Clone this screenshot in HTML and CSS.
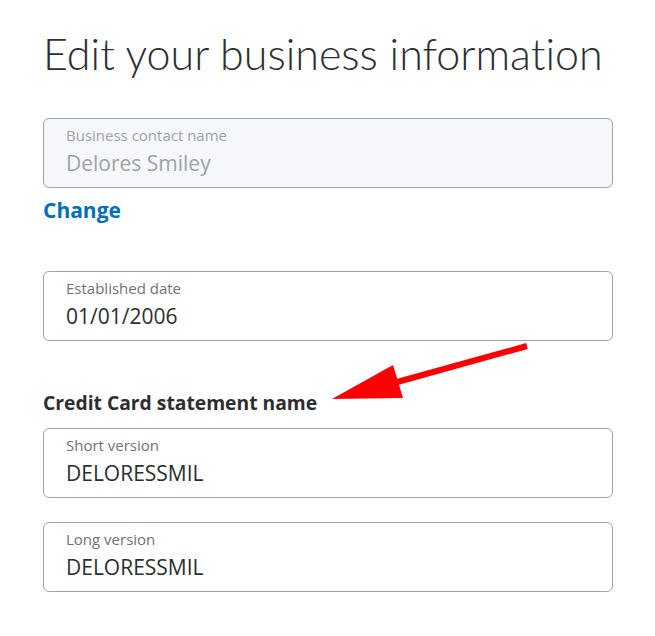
FILE: index.html
```html
<!DOCTYPE html>
<html>
<head>
<meta charset="utf-8">
<link rel="stylesheet" href="styles.css">
</head>
<body>
<main class="page">
  <h1 class="title">Edit your business information</h1>
  <div class="field field-disabled">
    <span class="label">Business contact name</span>
    <span class="value">Delores Smiley</span>
  </div>
  <a class="change" href="#">Change</a>
  <div class="field field-date">
    <span class="label">Established date</span>
    <span class="value">01/01/2006</span>
  </div>
  <h2 class="section">Credit Card statement name</h2>
  <div class="field">
    <span class="label">Short version</span>
    <span class="value">DELORESSMIL</span>
  </div>
  <div class="field field-long">
    <span class="label">Long version</span>
    <span class="value">DELORESSMIL</span>
  </div>
  <svg class="arrow" width="655" height="636" viewBox="0 0 655 636">
    <line x1="527" y1="346" x2="390" y2="384" stroke="#ff0000" stroke-width="6"/>
    <polygon points="332,399 393,365 403,398" fill="#ff0000"/>
  </svg>
</main>
</body>
</html>
```
FILE: styles.css
```css
html, body {
  margin: 0;
  padding: 0;
  background: #ffffff;
}
.page {
  position: relative;
  width: 570px;
  padding: 27px 0 0 43px;
  font-family: "Open Sans", "Noto Sans", sans-serif;
}
.title {
  margin: 0;
  font-family: Lato, "Open Sans", sans-serif;
  font-weight: 300;
  font-size: 43px;
  line-height: 54px;
  color: #2c2e2f;
  white-space: nowrap;
  font-variant-ligatures: none;
}
.field {
  box-sizing: border-box;
  height: 70px;
  border: 1px solid #9da3a6;
  border-radius: 6px;
  padding: 6px 0 0 22px;
  display: flex;
  flex-direction: column;
  background: #ffffff;
}
.field-disabled {
  margin-top: 37px;
  background: #f5f7fa;
}
.label {
  font-size: 15px;
  line-height: 20px;
  color: #6c7378;
}
.value {
  margin-top: 2px;
  font-size: 21px;
  line-height: 32px;
  color: #2c2e2f;
}
.field-disabled .label,
.field-disabled .value {
  color: #9da3a6;
}
.change {
  display: block;
  margin-top: 8px;
  font-size: 21px;
  line-height: 28px;
  font-weight: 700;
  color: #0070ba;
  text-decoration: none;
}
.field-date {
  margin-top: 47px;
}
.section {
  margin: 49px 0 12px 0;
  font-size: 19.3px;
  line-height: 26px;
  font-weight: 700;
  color: #2c2e2f;
}
.field-long {
  margin-top: 24px;
}
.arrow {
  position: absolute;
  left: 0;
  top: 0;
  pointer-events: none;
}
```
